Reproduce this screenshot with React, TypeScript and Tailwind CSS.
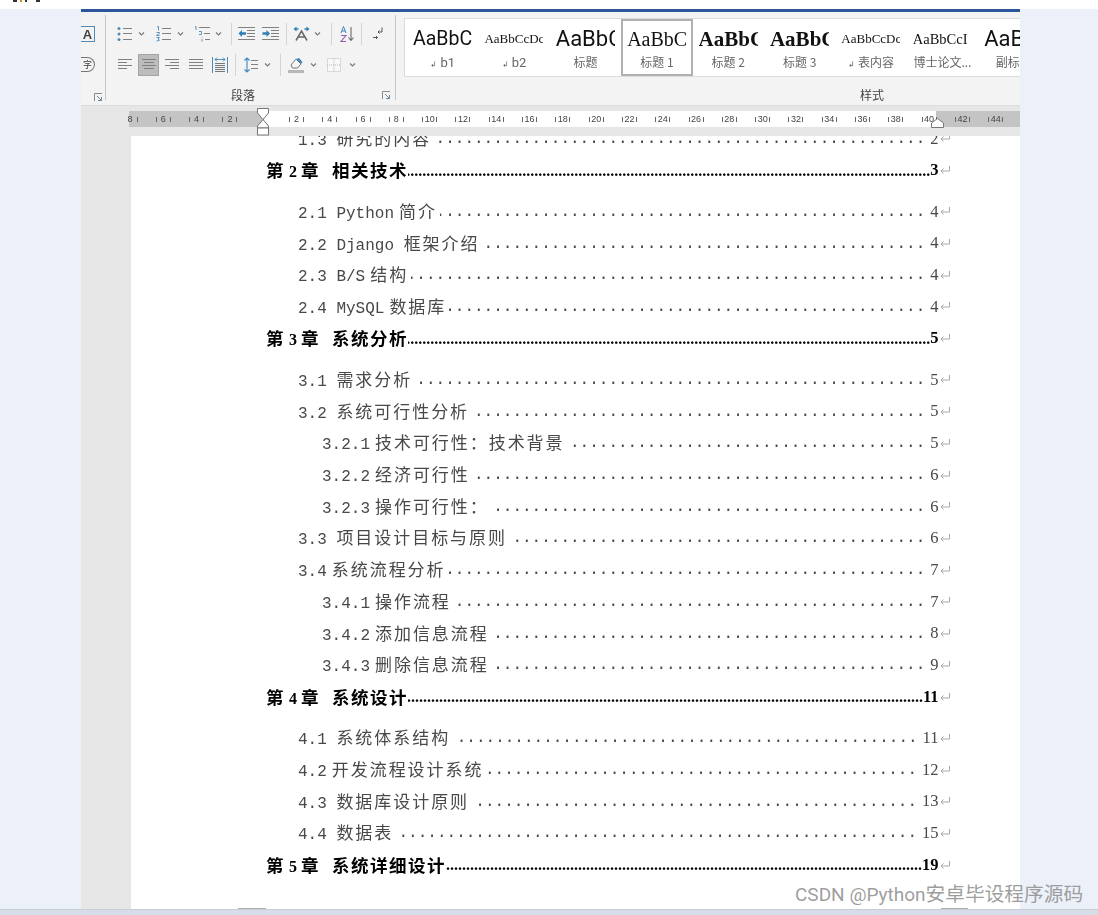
import React from "react";

const G = "#808080";
const B = "#4f8bb8";

function Lines({ x1 = 0, x2 = 14, ys, color = G, w = 1 }: { x1?: number; x2?: number; ys: number[]; color?: string; w?: number }) {
  return (
    <>
      {ys.map((y) => (
        <line key={y} x1={x1} x2={x2} y1={y + 0.5} y2={y + 0.5} stroke={color} strokeWidth={w} />
      ))}
    </>
  );
}

function Chev({ className = "" }: { className?: string }) {
  return (
    <svg width="7" height="4" viewBox="0 0 7 4" className={className}>
      <polyline points="1,0.5 3.5,3 6,0.5" fill="none" stroke="#777" strokeWidth="1.1" />
    </svg>
  );
}

function Sep({ className = "" }: { className?: string }) {
  return <div className={`w-px h-[22px] bg-[#d4d4d4] shrink-0 ${className}`} />;
}

function Bullets({ className = "" }: { className?: string }) {
  return (
    <svg width="15" height="16" viewBox="0 0 15 16" className={className}>
      <circle cx="2" cy="2.5" r="1.5" fill={B} />
      <circle cx="2" cy="8" r="1.5" fill={B} />
      <circle cx="2" cy="13.5" r="1.5" fill={B} />
      <Lines x1={6} x2={15} ys={[2, 7, 13]} />
    </svg>
  );
}

function Numbered({ className = "" }: { className?: string }) {
  return (
    <svg width="15" height="16" viewBox="0 0 15 16" className={className}>
      <path d="M1 1l1.500-.5v4M.5 6.500h3v.8l-3 2.200h3M.5 11.500h3l-1.500 1.500 1.500 1.200-3 .8" fill="none" stroke={B} strokeWidth="0.9" />
      <Lines x1={6} x2={15} ys={[2, 7, 13]} />
    </svg>
  );
}

function Multi({ className = "" }: { className?: string }) {
  return (
    <svg width="16" height="16" viewBox="0 0 16 16" className={className}>
      <path d="M1 1l1-.5v3.500M5 5.500h2.500v3H5M8 11l0 .5M8 13v2.500" fill="none" stroke={B} strokeWidth="0.9" />
      <Lines x1={5} x2={16} ys={[1]} />
      <Lines x1={10} x2={16} ys={[7]} />
      <Lines x1={11} x2={16} ys={[13]} />
    </svg>
  );
}

function Indent({ dir, className = "" }: { dir: "dec" | "inc"; className?: string }) {
  return (
    <svg width="17" height="14" viewBox="0 0 17 14" className={className}>
      <Lines x1={0} x2={17} ys={[0, 12]} />
      <Lines x1={9} x2={17} ys={[3, 6, 9]} />
      {dir === "dec" ? (
        <path d="M0.500 6.500L4 3v2.300h4v2.400H4V10z" fill="#2f7fb5" />
      ) : (
        <path d="M8 6.500L4.500 3v2.300h-4v2.400h4V10z" fill="#2f7fb5" />
      )}
    </svg>
  );
}

function Direction({ className = "" }: { className?: string }) {
  return (
    <svg width="17" height="16" viewBox="0 0 17 16" className={className}>
      <path d="M3 14.500L8.500 5 14 14.500M5 11h7" fill="none" stroke="#666" strokeWidth="1.500" />
      <path d="M0.500 3L3.500 .5v1.800h2v1.400h-2v1.800zM16.500 3L13.500 .5v1.800h-2v1.400h2v1.800z" fill="#2f7fb5" />
    </svg>
  );
}

function Sort({ className = "" }: { className?: string }) {
  return (
    <svg width="14" height="16" viewBox="0 0 14 16" className={className}>
      <path d="M1 7L3.500 .5 6 7M2 5h3" fill="none" stroke="#3f86c0" strokeWidth="1" />
      <path d="M1 9.500h5L1 15.500h5" fill="none" stroke="#8e5fb0" strokeWidth="1.100" />
      <path d="M11 1v13M8.500 11.500L11 14.500l2.500-3" fill="none" stroke="#666" strokeWidth="1.100" />
    </svg>
  );
}

function Pilcrow({ className = "" }: { className?: string }) {
  return (
    <svg width="10" height="14" viewBox="0 0 10 14" className={className}>
      <path d="M9 .5v4.500H5M6.500 3.500L5 5l1.500 1.500" fill="none" stroke="#555" strokeWidth="1" />
      <path d="M0 10.500h4.500M3 9l1.500 1.500L3 12" fill="none" stroke="#555" strokeWidth="1" />
    </svg>
  );
}

function Align({ ys, className = "" }: { ys: [number, number][]; className?: string }) {
  return (
    <svg width="14" height="13" viewBox="0 0 14 13" className={className}>
      {ys.map(([a, b], i) => (
        <line key={i} x1={a} x2={b} y1={i * 3 + 0.5} y2={i * 3 + 0.5} stroke={G} strokeWidth="1" />
      ))}
    </svg>
  );
}

function Distributed({ className = "" }: { className?: string }) {
  return (
    <svg width="16" height="16" viewBox="0 0 16 16" className={className}>
      <path d="M.5 0v16M15.500 0v16" stroke={B} strokeWidth="1" />
      <path d="M3 2.500h10M3 2.500l2-2M3 2.500l2 2M13 2.500l-2-2M13 2.500l-2 2" fill="none" stroke={B} strokeWidth="1" />
      <Lines x1={3} x2={13} ys={[6, 8, 10, 12, 14]} color="#777" />
    </svg>
  );
}

function Spacing({ className = "" }: { className?: string }) {
  return (
    <svg width="14" height="16" viewBox="0 0 14 16" className={className}>
      <path d="M3 1v14M.5 3.500L3 1l2.500 2.500M.5 12.500L3 15l2.500-2.500" fill="none" stroke="#3f86c0" strokeWidth="1.100" />
      <Lines x1={7} x2={14} ys={[3, 7, 11]} />
    </svg>
  );
}

function Shade({ className = "" }: { className?: string }) {
  return (
    <svg width="16" height="17" viewBox="0 0 16 17" className={className}>
      <path d="M3 8l5-6 5 5-3.500 4h-5z" fill="#f4f4f4" stroke="#777" strokeWidth="1" />
      <path d="M8 2L13 7 14.500 5 11 1z" fill="#3f86c0" />
      <rect x="0" y="13" width="16" height="3" fill="#b8b8b8" />
    </svg>
  );
}

function BorderIcon({ className = "" }: { className?: string }) {
  return (
    <svg width="14" height="14" viewBox="0 0 14 14" className={className}>
      <rect x=".5" y=".5" width="13" height="13" fill="#f8f8f8" stroke="#bbb" strokeDasharray="1 1" />
      <path d="M7 0v14M0 7h14" stroke="#bbb" strokeDasharray="1 1" />
    </svg>
  );
}

function Launcher() {
  return (
    <svg width="9" height="9" viewBox="0 0 9 9">
      <path d="M.5 8V.5H8" fill="none" stroke="#8a8a8a" strokeWidth="1" />
      <path d="M3 3l4.500 4.500M7.500 4v3.500H4" fill="none" stroke="#6f8798" strokeWidth="1" />
    </svg>
  );
}

const styleCells: { sample: string; cls: string; label: string; arrow?: boolean }[] = [
  { sample: "AaBbCc", cls: "font-['Roboto'] text-[19.500px]", label: "b1", arrow: true },
  { sample: "AaBbCcDc", cls: "font-['Liberation_Serif'] text-[13px]", label: "b2", arrow: true },
  { sample: "AaBbC", cls: "font-['Roboto'] text-[22px]", label: "标题" },
  { sample: "AaBbC", cls: "font-['Liberation_Serif'] text-[20px]", label: "标题 1" },
  { sample: "AaBbC", cls: "font-['Liberation_Serif'] text-[21px] font-bold", label: "标题 2" },
  { sample: "AaBbC", cls: "font-['Liberation_Serif'] text-[21px] font-bold", label: "标题 3" },
  { sample: "AaBbCcDc", cls: "font-['Liberation_Serif'] text-[13px]", label: "表内容", arrow: true },
  { sample: "AaBbCcI", cls: "font-['Liberation_Serif'] text-[14.500px]", label: "博士论文..." },
  { sample: "AaB", cls: "font-['Roboto'] text-[22px]", label: "副标题" },
];

const rulerNums = [8, 6, 4, 2, 0, 2, 4, 6, 8, 10, 12, 14, 16, 18, 20, 22, 24, 26, 28, 30, 32, 34, 36, 38, 40, 42, 44];

function Ruler() {
  return (
    <div className="h-[16px] mt-[5px] ml-[48px] bg-[linear-gradient(to_right,#c4c4c4_133px,#ffffff_133px,#ffffff_807px,#c4c4c4_807px)]">
      <div className="flex items-center h-full -ml-[15.650px]">
        {rulerNums.map((n, i) => (
          <div key={i} className="w-[33.300px] shrink-0 flex items-center justify-center">
            {n === 0 ? (
              <div className="w-px h-[5px] bg-[#666]" />
            ) : (
              <>
                <div className={`w-px h-[5px] ${i === 0 ? "bg-transparent" : "bg-[#666]"}`} />
                <span className="w-[13px] text-center text-[9px] leading-none text-[#444] font-['Liberation_Sans']">{n}</span>
                <div className="w-px h-[5px] bg-[#666]" />
              </>
            )}
          </div>
        ))}
      </div>
    </div>
  );
}

function Arrow() {
  return (
    <svg width="10" height="9" viewBox="0 0 10 9" className="shrink-0 ml-[1.500px]">
      <path d="M9.500 0v5H1M3.500 2.500L1 5l2.500 2.500" fill="none" stroke="#a8a8a8" strokeWidth="1" />
    </svg>
  );
}

function Mixed({ text, chapter }: { text: string; chapter?: boolean }) {
  const parts = text.split(/(\|)|([\u2E80-\uFFEF]+)/).filter((p) => p !== undefined && p !== "");
  return (
    <>
      {parts.map((p, i) => {
        if (p === "|") return <span key={i} className="inline-block w-[5px]" />;
        if (/[\u2E80-\uFFEF]/.test(p))
          return chapter ? (
            <span key={i} className="font-['Noto_Sans_CJK_SC'] text-[17.500px] tracking-[1.500px] font-bold">{p}</span>
          ) : (
            <span key={i} className="font-['Noto_Sans_CJK_SC'] text-[17px] tracking-[1.950px]">{p}</span>
          );
        return chapter ? (
          <span key={i} className="font-['Liberation_Serif'] text-[16px] font-bold">{p}</span>
        ) : (
          <span key={i} className="font-['Liberation_Mono'] text-[16px]">{p}</span>
        );
      })}
    </>
  );
}

type Row = { t: string; n: string; l: 1 | 2 | 3 };
const rows: Row[] = [
  { t: "1.3 研究的内容", n: "2", l: 2 },
  { t: "第 2 章   相关技术", n: "3", l: 1 },
  { t: "2.1 Python|简介", n: "4", l: 2 },
  { t: "2.2 Django 框架介绍", n: "4", l: 2 },
  { t: "2.3 B/S|结构", n: "4", l: 2 },
  { t: "2.4 MySQL|数据库", n: "4", l: 2 },
  { t: "第 3 章   系统分析", n: "5", l: 1 },
  { t: "3.1 需求分析", n: "5", l: 2 },
  { t: "3.2 系统可行性分析", n: "5", l: 2 },
  { t: "3.2.1|技术可行性：技术背景", n: "5", l: 3 },
  { t: "3.2.2|经济可行性", n: "6", l: 3 },
  { t: "3.2.3|操作可行性：", n: "6", l: 3 },
  { t: "3.3 项目设计目标与原则", n: "6", l: 2 },
  { t: "3.4|系统流程分析", n: "7", l: 2 },
  { t: "3.4.1|操作流程", n: "7", l: 3 },
  { t: "3.4.2|添加信息流程", n: "8", l: 3 },
  { t: "3.4.3|删除信息流程", n: "9", l: 3 },
  { t: "第 4 章   系统设计", n: "11", l: 1 },
  { t: "4.1 系统体系结构", n: "11", l: 2 },
  { t: "4.2|开发流程设计系统", n: "12", l: 2 },
  { t: "4.3 数据库设计原则", n: "13", l: 2 },
  { t: "4.4 数据表", n: "15", l: 2 },
  { t: "第 5 章   系统详细设计", n: "19", l: 1 },
];

const DOTS = ".".repeat(220);

function TocRow({ r }: { r: Row }) {
  const chapter = r.l === 1;
  const pad = chapter ? "pl-[135px] mb-[9.500px] text-black" : r.l === 2 ? "pl-[167px] text-[#484848]" : "pl-[191px] text-[#484848]";
  return (
    <div className={`flex items-center h-[31.720px] pr-[70px] whitespace-pre ${pad}`}>
      <span className="shrink-0 leading-none">
        <Mixed text={r.t} chapter={chapter} />
      </span>
      {chapter ? (
        <span className="flex-1 min-w-0 flex justify-end overflow-hidden font-['Liberation_Serif'] font-bold text-[16px] leading-none">
          <span className="shrink-0">{DOTS + DOTS}</span>
        </span>
      ) : (
        <span className="flex-1 min-w-0 ml-[3px] flex justify-end overflow-hidden font-['Liberation_Mono'] text-[16px] leading-none pr-[5px]">
          <span className="shrink-0">{DOTS}</span>
        </span>
      )}
      <span className={`shrink-0 font-['Liberation_Serif'] text-[16.500px] leading-none ${chapter ? "font-bold" : ""}`}>{r.n}</span>
      <Arrow />
    </div>
  );
}

export default function App() {
  return (
    <div className="w-[1098px] h-[915px] overflow-hidden flex flex-col bg-[#ebf0f9] relative font-['Noto_Sans_CJK_SC',sans-serif]">
      <div className="h-[9px] bg-white shrink-0">
        <div className="flex gap-[3px] ml-[13px] h-[2px]">
          <div className="w-[4px] bg-[#333]" />
          <div className="w-[2px] bg-[#d08a20]" />
          <div className="w-[2px] bg-[#333]" />
          <div className="w-[4px] ml-[6px] bg-[#333]" />
        </div>
      </div>

      <div className="flex-1 min-h-0 pl-[81px]">
        <div className="w-[939px] h-full flex flex-col blur-[0.3px]">
          <div className="h-[3px] bg-[#2b579a] shrink-0" />

          {/* Ribbon */}
          <div className="h-[93px] shrink-0 bg-[#f3f3f3] flex">
            <div className="w-[24px] flex flex-col pt-[14px]">
              <div className="w-[14px] h-[16px] border border-l-0 border-[#4f8bb8] flex items-center justify-center text-[13px] leading-none font-bold text-[#444] font-['Liberation_Sans']">
                A
              </div>
              <div className="w-[14px] h-[15px] mt-[15px] rounded-r-full border border-l-0 border-[#777] flex items-center justify-center text-[9px] leading-none text-[#444]">
                字
              </div>
              <div className="mt-[21px] ml-[13px]">
                <Launcher />
              </div>
            </div>
            <div className="w-px mt-[3px] mb-[5px] bg-[#c6c6c6]" />

            <div className="w-[289px] flex flex-col">
              <div className="flex items-center h-[16px] mt-[14px]">
                <Bullets className="ml-[11px]" />
                <Chev className="ml-[6px]" />
                <Numbered className="ml-[11px]" />
                <Chev className="ml-[6px]" />
                <Multi className="ml-[10px]" />
                <Chev className="ml-[5px]" />
                <Sep className="ml-[9px]" />
                <Indent dir="dec" className="ml-[6px]" />
                <Indent dir="inc" className="ml-[7px]" />
                <Sep className="ml-[7px]" />
                <Direction className="ml-[6px]" />
                <Chev className="ml-[4px]" />
                <Sep className="ml-[10px]" />
                <Sort className="ml-[8px]" />
                <Sep className="ml-[7px]" />
                <Pilcrow className="ml-[11px]" />
              </div>
              <div className="flex items-center h-[22px] mt-[12px]">
                <Align className="ml-[12px]" ys={[[0, 14], [0, 9], [0, 14], [0, 9]]} />
                <div className="ml-[6px] w-[21px] h-[22px] bg-[#bcbcbc] border border-[#a4a4a4] flex items-center justify-center">
                  <Align ys={[[0, 14], [2, 12], [0, 14], [2, 12]]} />
                </div>
                <Align className="ml-[6px]" ys={[[0, 14], [5, 14], [0, 14], [5, 14]]} />
                <Align className="ml-[10px]" ys={[[0, 14], [0, 14], [0, 14], [0, 14]]} />
                <Distributed className="ml-[9px]" />
                <Sep className="ml-[7px]" />
                <Spacing className="ml-[8px]" />
                <Chev className="ml-[6px]" />
                <Sep className="ml-[9px]" />
                <Shade className="ml-[7px]" />
                <Chev className="ml-[6px]" />
                <BorderIcon className="ml-[10px]" />
                <Chev className="ml-[8px]" />
              </div>
              <div className="flex items-center h-[16px] mt-[11px] pr-[4px]">
                <span className="ml-[125px] text-[12px] leading-none text-[#444]">段落</span>
                <span className="ml-auto">
                  <Launcher />
                </span>
              </div>
            </div>
            <div className="w-px mt-[3px] mb-[5px] bg-[#c6c6c6]" />

            <div className="flex-1 min-w-0 flex flex-col overflow-hidden">
              <div className="h-[59px] mt-[6px] ml-[8px] bg-white border border-r-0 border-[#dcdcdc] flex items-center pl-[2px] shrink-0">
                {styleCells.map((c, i) => (
                  <div
                    key={i}
                    className={`w-[71.400px] h-[57px] shrink-0 flex flex-col ${
                      i === 3 ? "border-2 border-[#b0b0b0] px-[4px] pt-[4px]" : "px-[6px] pt-[6px]"
                    }`}
                  >
                    <div className={`w-[59px] overflow-hidden whitespace-nowrap h-[30px] leading-[28px] text-[#111] ${c.cls}`}>
                      {c.sample}
                    </div>
                    <div className="mt-[1px] text-center text-[12px] leading-none text-[#666] whitespace-nowrap">
                      {c.arrow && <span className="text-[8px] mr-[3px]">↲</span>}
                      <span className={i === 0 || i === 1 ? "font-['Roboto'] text-[13px]" : ""}>{c.label}</span>
                    </div>
                  </div>
                ))}
              </div>
              <div className="text-[12px] leading-none text-[#444] mt-[12px] ml-[464px]">样式</div>
            </div>
          </div>

          {/* Ruler band */}
          <div className="h-[31px] shrink-0 bg-[#e6e6e6] border-t border-[#dcdcdc] relative">
            <Ruler />
            <svg width="12" height="28" viewBox="0 0 12 28" className="absolute left-[176px] top-[2px]">
              <path d="M.5.5h11V5L6 11.500.5 5z" fill="#fff" stroke="#777" />
              <path d="M.5 18L6 11.500 11.500 18v2H.5z" fill="#fff" stroke="#777" />
              <rect x=".5" y="20" width="11" height="7" fill="#fff" stroke="#777" />
            </svg>
            <svg width="13" height="10" viewBox="0 0 13 10" className="absolute left-[850px] top-[12px]">
              <path d="M.5 9.500V5L6.500.5 12.500 5v4.500z" fill="#fff" stroke="#777" />
            </svg>
          </div>

          {/* Document */}
          <div className="flex-1 min-h-0 flex bg-[#e6e6e6]">
            <div className="w-[50px] shrink-0" />
            <div className="flex-1 min-w-0 bg-white overflow-hidden flex flex-col">
              <div className="flex-1 min-h-0 overflow-hidden">
                <div className="-mt-[13px]">
                  {rows.map((r, i) => (
                    <TocRow key={i} r={r} />
                  ))}
                </div>
              </div>
              <div className="h-px shrink-0 flex">
                <div className="ml-[107px] w-[28px] bg-[#b0b0b0]" />
                <div className="ml-[675px] w-[27px] bg-[#b0b0b0]" />
              </div>
            </div>
          </div>
        </div>
      </div>

      <div className="h-[6px] shrink-0 bg-[#d6dde9] border-t border-[#c8ccd4]" />
      <div className="absolute left-[795px] top-[884px] text-[19px] leading-[22px] text-[#8c8c8c]/85 font-['Roboto','Noto_Sans_CJK_SC',sans-serif] whitespace-nowrap">
        CSDN @Python<span className="text-[19.700px]">安卓毕设程序源码</span>
      </div>
    </div>
  );
}
